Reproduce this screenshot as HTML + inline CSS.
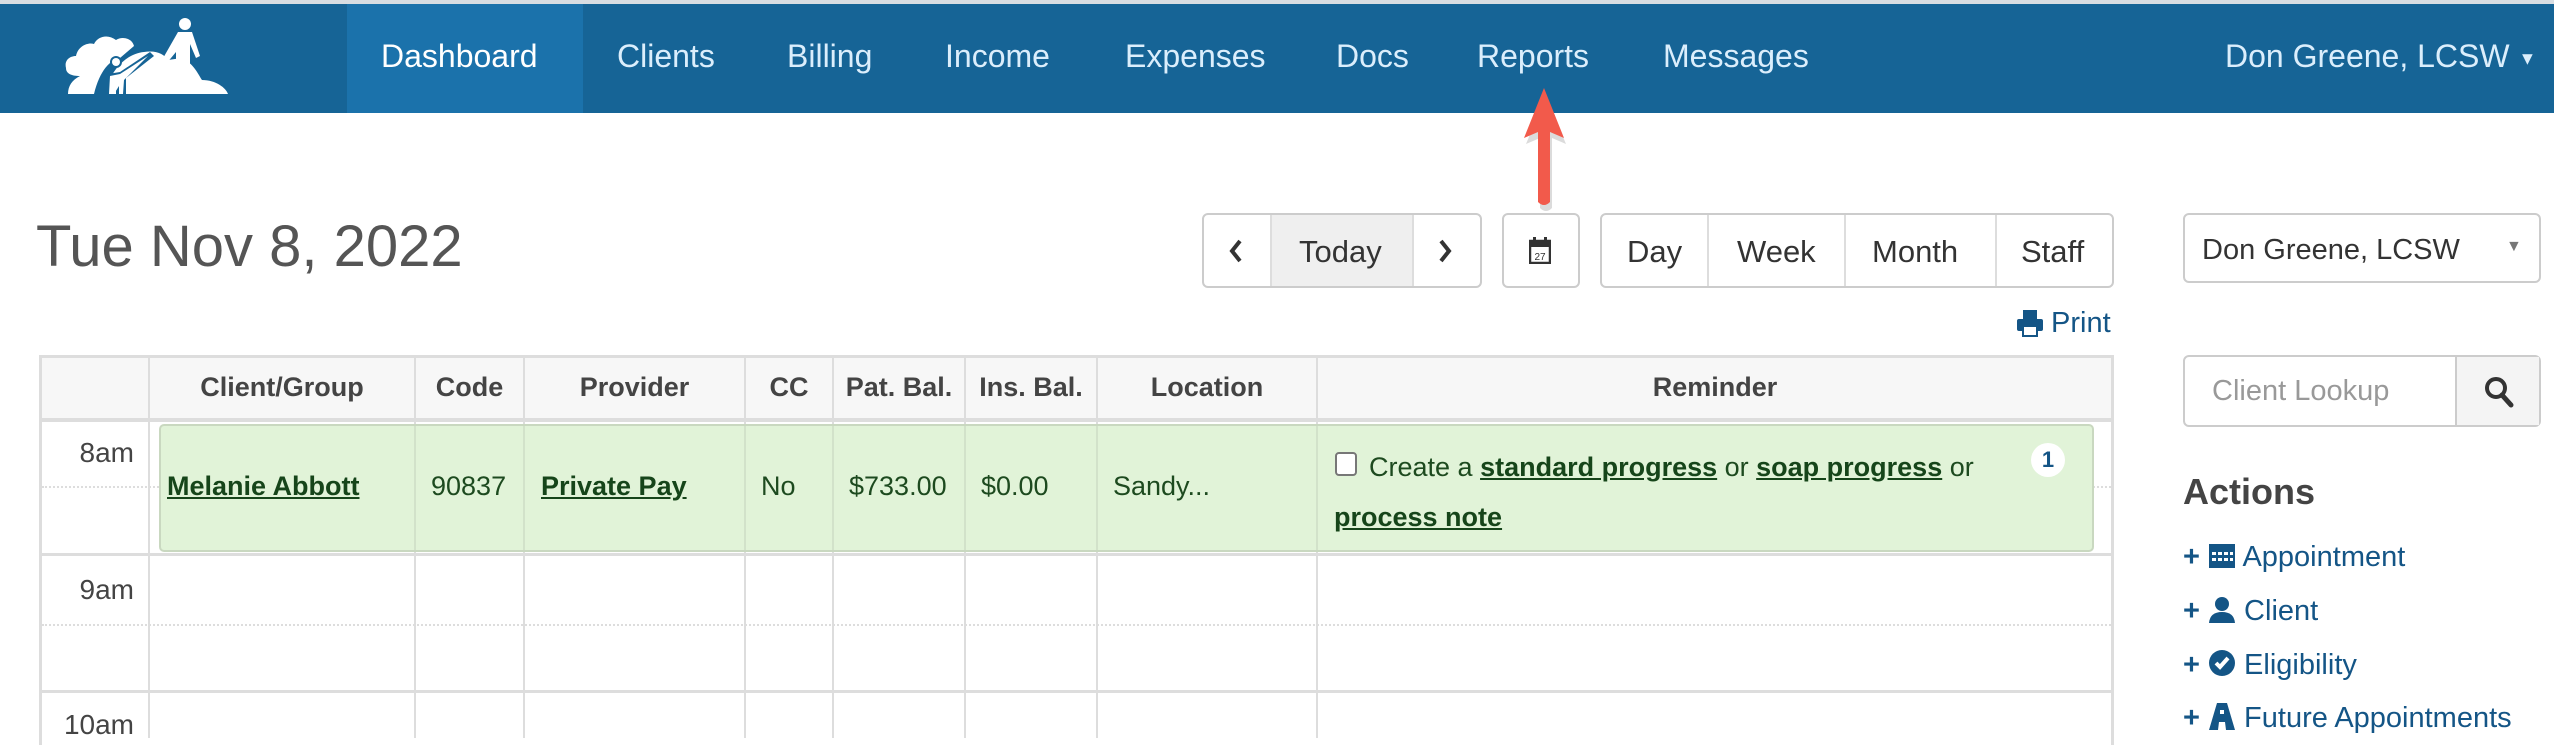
<!DOCTYPE html>
<html><head><meta charset="utf-8"><style>
*{margin:0;padding:0;box-sizing:border-box}
body{width:2554px;height:738px;overflow:hidden;background:#fff;font-family:"Liberation Sans",sans-serif;position:relative;color:#333}
.a{position:absolute;white-space:nowrap}
.nav{position:absolute;left:0;top:4px;width:2554px;height:109px;background:#166496}
.nt{position:absolute;top:36px;font-size:32px;color:#dbeefc;line-height:40px}
.btn{position:absolute;top:213px;height:75px;border:2px solid #ccc;border-radius:6px;background:#fff}
.bt{position:absolute;top:234px;font-size:31px;color:#333;line-height:36px}
.vl{position:absolute;width:2px;background:#ddd}
.th{position:absolute;top:370px;font-size:27px;font-weight:bold;color:#444;line-height:34px;text-align:center}
.td{position:absolute;top:469px;font-size:27px;color:#1d4a1f;line-height:34px}
.lk{font-weight:bold;text-decoration:underline;color:#16451a}
.act{position:absolute;left:2183px;font-size:29px;color:#145586;line-height:36px}
.tm{position:absolute;font-size:28px;color:#444;right:2420px;line-height:34px}
</style></head><body>
<div class="a" style="left:0;top:0;width:2554px;height:4px;background:#d8dde2"></div>
<div class="nav"></div>
<div class="a" style="left:347px;top:4px;width:236px;height:109px;background:#1b72ab"></div>
<svg class="a" style="left:60px;top:18px" width="170" height="80" viewBox="0 0 170 80">
<path d="M6 50 C4 42 10 38 16 38 C18 28 28 24 34 26 C38 18 48 16 56 22 C62 18 72 20 74 28 L60 40 C50 42 40 52 34 76 L8 76 C8 68 12 62 20 58 C12 58 6 56 6 50 Z" fill="#fff"/>
<path d="M46 76 C48 56 64 36 84 34 C96 32 104 36 108 42 L122 40 C134 46 138 56 142 62 C156 62 166 70 168 76 Z" fill="#fff"/>
<circle cx="125" cy="6" r="6" fill="#fff"/>
<path d="M118 14 L132 14 L140 38 L136 40 L130 26 L130 54 L116 54 L116 34 L106 46 L102 42 Z" fill="#fff"/>
<circle cx="56" cy="44" r="6" fill="#166496"/>
<path d="M48 56 L60 54 L90 34 L94 38 L66 60 L66 76 L56 76 L56 66 L52 76 L44 76 Z" fill="#166496"/>
<circle cx="56" cy="44" r="4" fill="#fff"/>
<path d="M50 58 L60 56 L88 38 L64 62 L63 76 L59 76 L59 68 L54 76 L49 76 Z" fill="#fff"/>
</svg>
<div class="nt" style="left:381px;color:#fff">Dashboard</div>
<div class="nt" style="left:617px">Clients</div>
<div class="nt" style="left:787px">Billing</div>
<div class="nt" style="left:945px">Income</div>
<div class="nt" style="left:1125px">Expenses</div>
<div class="nt" style="left:1336px">Docs</div>
<div class="nt" style="left:1477px">Reports</div>
<div class="nt" style="left:1663px">Messages</div>
<div class="nt" style="left:2225px">Don Greene, LCSW <span style="font-size:18px;vertical-align:middle">▼</span></div>
<svg class="a" style="left:1516px;top:86px" width="56" height="130" viewBox="0 0 56 130"><path d="M28 6 L48 54 L34 48 L34 118 Q28 124 22 118 L22 48 L8 54 Z" fill="#999" opacity="0.35" transform="translate(2,4)"/><path d="M28 2 L48 52 L34 46 L34 116 Q28 122 22 116 L22 46 L8 52 Z" fill="#f25a4b"/></svg>
<div class="a" style="left:36px;top:212px;font-size:58px;color:#555;line-height:70px">Tue Nov 8, 2022</div>
<div class="btn" style="left:1202px;width:280px"></div>
<div class="a" style="left:1270px;top:215px;width:142px;height:71px;background:#efefef"></div>
<div class="vl" style="left:1270px;top:215px;height:71px"></div><div class="vl" style="left:1412px;top:215px;height:71px"></div>
<svg class="a" style="left:1228px;top:239px" width="16" height="24" viewBox="0 0 16 24"><path d="M12 2 L4 12 L12 22" stroke="#333" stroke-width="4" fill="none"/></svg>
<div class="bt" style="left:1299px">Today</div>
<svg class="a" style="left:1437px;top:239px" width="16" height="24" viewBox="0 0 16 24"><path d="M4 2 L12 12 L4 22" stroke="#333" stroke-width="4" fill="none"/></svg>
<div class="btn" style="left:1502px;width:78px"></div>
<svg class="a" style="left:1529px;top:236px" width="22" height="28" viewBox="0 0 22 28"><rect x="1" y="5" width="20" height="22" fill="none" stroke="#333" stroke-width="2.5"/><rect x="1" y="5" width="20" height="6" fill="#333"/><rect x="4" y="1" width="3" height="6" fill="#333"/><rect x="15" y="1" width="3" height="6" fill="#333"/><text x="11" y="24" font-size="10" text-anchor="middle" fill="#333" font-family="Liberation Sans">27</text></svg>
<div class="btn" style="left:1600px;width:514px"></div>
<div class="vl" style="left:1707px;top:215px;height:71px"></div><div class="vl" style="left:1844px;top:215px;height:71px"></div><div class="vl" style="left:1995px;top:215px;height:71px"></div>
<div class="bt" style="left:1627px">Day</div>
<div class="bt" style="left:1737px">Week</div>
<div class="bt" style="left:1872px">Month</div>
<div class="bt" style="left:2021px">Staff</div>
<svg class="a" style="left:2017px;top:309px" width="26" height="28" viewBox="0 0 26 28"><rect x="6" y="1" width="14" height="9" fill="#145586"/><rect x="0" y="10" width="26" height="12" rx="2" fill="#145586"/><rect x="6" y="17" width="14" height="10" fill="#fff" stroke="#145586" stroke-width="2"/></svg>
<div class="a" style="left:2051px;top:306px;font-size:29px;color:#145586;line-height:34px">Print</div>
<div class="a" style="left:2183px;top:213px;width:358px;height:70px;border:2px solid #ccc;border-radius:6px"></div>
<div class="a" style="left:2202px;top:233px;font-size:29px;color:#333;line-height:34px">Don Greene, LCSW</div>
<div class="a" style="left:2506px;top:238px;font-size:16px;color:#777">▼</div>
<div class="a" style="left:2183px;top:355px;width:358px;height:72px;border:2px solid #ccc;border-radius:6px"></div>
<div class="vl" style="left:2455px;top:357px;height:68px;background:#ccc"></div>
<div class="a" style="left:2457px;top:357px;width:82px;height:68px;background:#f4f4f4"></div>
<div class="a" style="left:2212px;top:374px;font-size:29px;color:#999;line-height:34px">Client Lookup</div>
<svg class="a" style="left:2484px;top:376px" width="30" height="32" viewBox="0 0 30 32"><circle cx="12" cy="12" r="9" fill="none" stroke="#333" stroke-width="4"/><path d="M18 19 L27 29" stroke="#333" stroke-width="5" stroke-linecap="round"/></svg>
<div class="a" style="left:2183px;top:471px;font-size:36px;font-weight:bold;color:#444;line-height:42px">Actions</div>
<div class="act" style="top:539px"><b>+</b> <svg width="28" height="28" viewBox="0 0 28 28" style="vertical-align:-3px"><rect x="1" y="3" width="26" height="24" fill="#145586"/><g fill="#fff"><rect x="4" y="11" width="4" height="3"/><rect x="10" y="11" width="4" height="3"/><rect x="16" y="11" width="4" height="3"/><rect x="22" y="11" width="3" height="3"/><rect x="4" y="17" width="4" height="3"/><rect x="10" y="17" width="4" height="3"/><rect x="16" y="17" width="4" height="3"/><rect x="22" y="17" width="3" height="3"/></g></svg> Appointment</div>
<div class="act" style="top:593px"><b>+</b> <svg width="28" height="28" viewBox="0 0 28 28" style="vertical-align:-3px"><circle cx="14" cy="9" r="7" fill="#145586"/><path d="M1 28 Q2 17 14 17 Q26 17 27 28 Z" fill="#145586"/></svg> Client</div>
<div class="act" style="top:647px"><b>+</b> <svg width="28" height="28" viewBox="0 0 28 28" style="vertical-align:-3px"><circle cx="14" cy="14" r="13" fill="#145586"/><path d="M8 14 L12 18 L20 9" stroke="#fff" stroke-width="4" fill="none"/></svg> Eligibility</div>
<div class="act" style="top:700px"><b>+</b> <svg width="28" height="28" viewBox="0 0 28 28" style="vertical-align:-3px"><path d="M1 28 L9 1 L19 1 L27 28 L18 28 L17 20 L11 20 L10 28 Z" fill="#145586"/><rect x="12" y="8" width="4" height="4" fill="#fff"/></svg> Future Appointments</div>
<div class="a" style="left:39px;top:355px;width:2075px;height:390px;border:3px solid #ddd;border-bottom:none"></div>
<div class="a" style="left:42px;top:358px;width:2069px;height:62px;background:#f7f7f7"></div>
<div class="a" style="left:42px;top:418px;width:2069px;height:4px;background:#ddd"></div>
<div class="a" style="left:42px;top:553px;width:2069px;height:3px;background:#ddd"></div>
<div class="a" style="left:42px;top:690px;width:2069px;height:3px;background:#ddd"></div>
<div class="a" style="left:42px;top:486px;width:2069px;border-top:2px dotted #ddd"></div>
<div class="a" style="left:42px;top:624px;width:2069px;border-top:2px dotted #ddd"></div>
<div class="vl" style="left:148px;top:358px;height:380px"></div>
<div class="vl" style="left:414px;top:358px;height:380px"></div>
<div class="vl" style="left:523px;top:358px;height:380px"></div>
<div class="vl" style="left:744px;top:358px;height:380px"></div>
<div class="vl" style="left:832px;top:358px;height:380px"></div>
<div class="vl" style="left:964px;top:358px;height:380px"></div>
<div class="vl" style="left:1096px;top:358px;height:380px"></div>
<div class="vl" style="left:1316px;top:358px;height:380px"></div>
<div class="th" style="left:150px;width:264px">Client/Group</div>
<div class="th" style="left:416px;width:107px">Code</div>
<div class="th" style="left:525px;width:219px">Provider</div>
<div class="th" style="left:746px;width:86px">CC</div>
<div class="th" style="left:834px;width:130px">Pat. Bal.</div>
<div class="th" style="left:966px;width:130px">Ins. Bal.</div>
<div class="th" style="left:1098px;width:218px">Location</div>
<div class="th" style="left:1318px;width:794px">Reminder</div>
<div class="tm" style="top:436px">8am</div>
<div class="tm" style="top:573px">9am</div>
<div class="tm" style="top:708px">10am</div>
<div class="a" style="left:159px;top:424px;width:1935px;height:128px;background:#e1f3d8;border:2px solid #c9d8c0;border-radius:5px"></div>
<div class="vl" style="left:414px;top:426px;height:124px;background:#d2e2ca"></div>
<div class="vl" style="left:523px;top:426px;height:124px;background:#d2e2ca"></div>
<div class="vl" style="left:744px;top:426px;height:124px;background:#d2e2ca"></div>
<div class="vl" style="left:832px;top:426px;height:124px;background:#d2e2ca"></div>
<div class="vl" style="left:964px;top:426px;height:124px;background:#d2e2ca"></div>
<div class="vl" style="left:1096px;top:426px;height:124px;background:#d2e2ca"></div>
<div class="vl" style="left:1316px;top:426px;height:124px;background:#d2e2ca"></div>
<div class="td lk" style="left:167px">Melanie Abbott</div>
<div class="td" style="left:431px">90837</div>
<div class="td lk" style="left:541px">Private Pay</div>
<div class="td" style="left:761px">No</div>
<div class="td" style="left:849px">$733.00</div>
<div class="td" style="left:981px">$0.00</div>
<div class="td" style="left:1113px">Sandy...</div>
<div class="a" style="left:1335px;top:452px;width:22px;height:24px;border:2px solid #777;border-radius:4px;background:#fff"></div>
<div class="td" style="left:1369px;top:450px">Create a <span class="lk">standard progress</span> or <span class="lk">soap progress</span> or</div>
<div class="td lk" style="left:1334px;top:500px">process note</div>
<div class="a" style="left:2031px;top:443px;width:34px;height:34px;border-radius:17px;background:#fff;color:#145586;font-size:22px;font-weight:bold;text-align:center;line-height:34px">1</div>
</body></html>
